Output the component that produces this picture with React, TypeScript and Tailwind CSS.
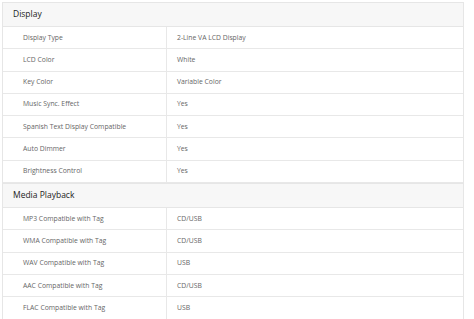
const sections: { title: string; rows: [string, string][] }[] = [
  {
    title: "Display",
    rows: [
      ["Display Type", "2-Line VA LCD Display"],
      ["LCD Color", "White"],
      ["Key Color", "Variable Color"],
      ["Music Sync. Effect", "Yes"],
      ["Spanish Text Display Compatible", "Yes"],
      ["Auto Dimmer", "Yes"],
      ["Brightness Control", "Yes"],
    ],
  },
  {
    title: "Media Playback",
    rows: [
      ["MP3 Compatible with Tag", "CD/USB"],
      ["WMA Compatible with Tag", "CD/USB"],
      ["WAV Compatible with Tag", "USB"],
      ["AAC Compatible with Tag", "CD/USB"],
      ["FLAC Compatible with Tag", "USB"],
    ],
  },
];

export default function App() {
  return (
    <div
      className="w-[474px] h-[319px] overflow-hidden bg-white pt-[2px] pl-[2px]"
      style={{ fontFamily: '"Open Sans", "Noto Sans", sans-serif' }}
    >
      <div className="w-[462px] border-l border-r border-[#e6e6e6]">
        {sections.map((section) => (
          <div key={section.title}>
            <div className="h-[25px] flex items-center pl-[10px] bg-[#f7f7f7] border-t border-b border-[#e6e6e6] text-[8.5px] text-[#222]">
              {section.title}
            </div>
            {section.rows.map(([label, value]) => (
              <div
                key={label}
                className="h-[22.3px] flex border-b border-[#e8e8e8] text-[6.8px] text-[#666]"
              >
                <div className="w-[164px] shrink-0 flex items-center pl-[20px] border-r border-[#e8e8e8]">
                  {label}
                </div>
                <div className="flex-1 flex items-center pl-[10px]">{value}</div>
              </div>
            ))}
          </div>
        ))}
      </div>
    </div>
  );
}
